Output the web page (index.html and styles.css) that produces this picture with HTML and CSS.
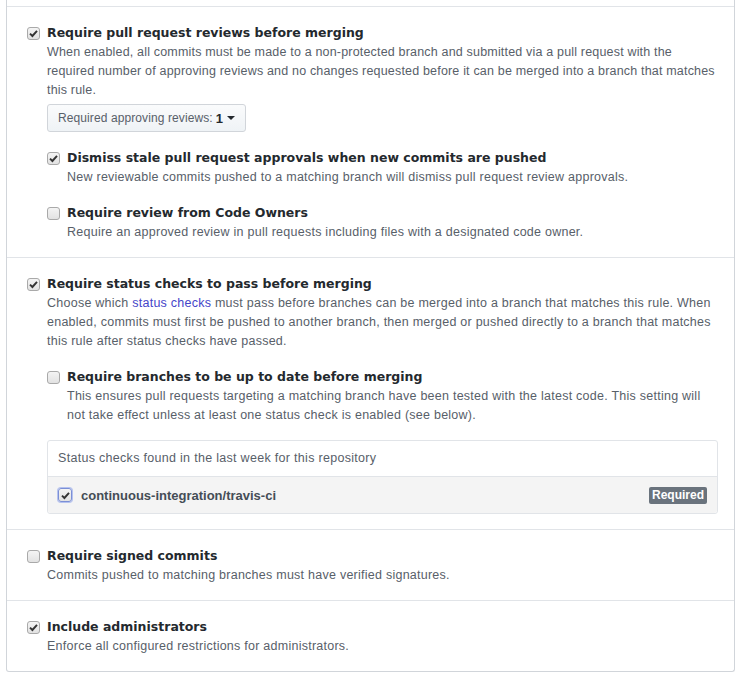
FILE: index.html
```html
<!DOCTYPE html>
<html>
<head>
<meta charset="utf-8">
<link rel="stylesheet" href="styles.css">
</head>
<body>
<div class="box">
  <div class="row stub"></div>

  <div class="row">
    <div class="opt">
      <span class="cb on"><svg viewBox="0 0 13 13" width="13" height="13"><path d="M3 6.6 L5.4 9 L10 3.8" fill="none" stroke="#333" stroke-width="1.9"/></svg></span>
      <div class="body">
        <div class="title">Require pull request reviews before merging</div>
        <p class="note tight">When enabled, all commits must be made to a non-protected branch and submitted via a pull request with the required number of approving reviews and no changes requested before it can be merged into a branch that matches this rule.</p>
        <button class="select">Required approving reviews: <b>1</b><span class="caret"></span></button>

        <div class="opt sub">
          <span class="cb on"><svg viewBox="0 0 13 13" width="13" height="13"><path d="M3 6.6 L5.4 9 L10 3.8" fill="none" stroke="#333" stroke-width="1.9"/></svg></span>
          <div class="body">
            <div class="title">Dismiss stale pull request approvals when new commits are pushed</div>
            <p class="note">New reviewable commits pushed to a matching branch will dismiss pull request review approvals.</p>
          </div>
        </div>

        <div class="opt sub">
          <span class="cb"></span>
          <div class="body">
            <div class="title">Require review from Code Owners</div>
            <p class="note">Require an approved review in pull requests including files with a designated code owner.</p>
          </div>
        </div>
      </div>
    </div>
  </div>

  <div class="row">
    <div class="opt">
      <span class="cb on"><svg viewBox="0 0 13 13" width="13" height="13"><path d="M3 6.6 L5.4 9 L10 3.8" fill="none" stroke="#333" stroke-width="1.9"/></svg></span>
      <div class="body">
        <div class="title">Require status checks to pass before merging</div>
        <p class="note">Choose which <a class="link" href="#">status checks</a> must pass before branches can be merged into a branch that matches this rule. When enabled, commits must first be pushed to another branch, then merged or pushed directly to a branch that matches this rule after status checks have passed.</p>

        <div class="opt sub">
          <span class="cb"></span>
          <div class="body">
            <div class="title">Require branches to be up to date before merging</div>
            <p class="note">This ensures pull requests targeting a matching branch have been tested with the latest code. This setting will not take effect unless at least one status check is enabled (see below).</p>
          </div>
        </div>

        <div class="checks">
          <div class="checks-head">Status checks found in the last week for this repository</div>
          <div class="checks-row">
            <span class="cb on focus"><svg viewBox="0 0 13 13" width="13" height="13"><path d="M3 6.6 L5.4 9 L10 3.8" fill="none" stroke="#333" stroke-width="1.9"/></svg></span>
            <span class="ctx">continuous-integration/travis-ci</span>
            <span class="badge">Required</span>
          </div>
        </div>
      </div>
    </div>
  </div>

  <div class="row">
    <div class="opt">
      <span class="cb"></span>
      <div class="body">
        <div class="title">Require signed commits</div>
        <p class="note">Commits pushed to matching branches must have verified signatures.</p>
      </div>
    </div>
  </div>

  <div class="row">
    <div class="opt">
      <span class="cb on"><svg viewBox="0 0 13 13" width="13" height="13"><path d="M3 6.6 L5.4 9 L10 3.8" fill="none" stroke="#333" stroke-width="1.9"/></svg></span>
      <div class="body">
        <div class="title">Include administrators</div>
        <p class="note">Enforce all configured restrictions for administrators.</p>
      </div>
    </div>
  </div>
</div>
</body>
</html>
```

FILE: styles.css
```css
html, body {
  margin: 0;
  padding: 0;
  background: #fff;
}

body {
  font-family: "Liberation Sans", Arial, sans-serif;
  font-size: 12px;
  color: #24292e;
}

.box {
  margin-left: 6px;
  width: 727px;
  border: 1px solid #d1d5da;
  border-top: 0;
  border-radius: 0 0 3px 3px;
}

.row {
  padding: 15px 16px 15px 20px;
  border-top: 1px solid #e1e4e8;
}

.row.stub {
  height: 6px;
  padding: 0;
  border-top: 0;
}

.opt {
  display: flex;
  align-items: flex-start;
}

.opt.sub {
  margin-top: 15px;
}

.cb {
  flex: none;
  box-sizing: border-box;
  width: 13px;
  height: 13px;
  margin-top: 5px;
  margin-right: 7px;
  border: 1px solid #a9a9a9;
  border-radius: 3px;
  background: linear-gradient(#f4f4f4, #e2e2e2);
  display: flex;
  align-items: center;
  justify-content: center;
}

.cb svg {
  display: block;
  margin: -1px;
}

.cb.focus {
  border-color: #7b8fd6;
  box-shadow: 0 0 0 1px #b5c2ef;
}

.body {
  flex: 1;
  min-width: 0;
}

.title {
  font-family: "DejaVu Sans", sans-serif;
  font-weight: bold;
  font-size: 12.5px;
  line-height: 21px;
  color: #24292e;
}

.note {
  margin: 0;
  font-size: 12.5px;
  letter-spacing: 0.25px;
  line-height: 19px;
  color: #586069;
}

.note.tight {
  letter-spacing: 0.18px;
}

.link {
  color: #4545c9;
  text-decoration: none;
}

.select {
  display: inline-flex;
  align-items: center;
  margin-top: 4px;
  height: 28px;
  box-sizing: border-box;
  padding: 0 10px;
  font-family: "Liberation Sans", Arial, sans-serif;
  font-size: 12px;
  letter-spacing: 0.1px;
  color: #586069;
  background: linear-gradient(#fafbfc, #eff3f6);
  border: 1px solid #d1d5da;
  border-radius: 3px;
}

.select b {
  color: #24292e;
  margin-left: 3px;
  font-size: 13px;
}

.caret {
  display: inline-block;
  width: 0;
  height: 0;
  margin-left: 4px;
  border-left: 4px solid transparent;
  border-right: 4px solid transparent;
  border-top: 4px solid #24292e;
}

.checks {
  margin-top: 15px;
  border: 1px solid #e1e4e8;
  border-radius: 3px;
}

.checks-head {
  padding: 8px 10px;
  line-height: 19px;
  font-size: 12.5px;
  letter-spacing: 0.3px;
  color: #586069;
}

.checks-row {
  display: flex;
  align-items: center;
  padding: 8px 10px;
  height: 20px;
  background: #f4f4f4;
  border-top: 1px solid #e1e4e8;
  border-radius: 0 0 3px 3px;
}

.checks-row .cb {
  margin-top: 0;
  margin-right: 9px;
  width: 14px;
  height: 14px;
}

.ctx {
  flex: 1;
  font-weight: bold;
  font-size: 13px;
  color: #444d56;
}

.badge {
  background: #6a737d;
  color: #fff;
  font-weight: bold;
  font-size: 12px;
  line-height: 17px;
  padding: 0 3px;
  border-radius: 2px;
}
```
